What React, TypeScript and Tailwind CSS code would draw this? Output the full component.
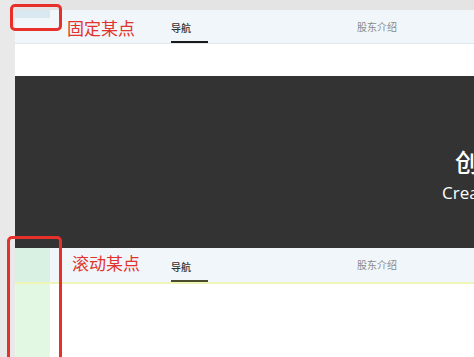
import React from 'react';

const cjk = { fontFamily: '"Noto Sans", "Noto Sans CJK SC", sans-serif' };

function NavBar({ label, strip, underline, labelPad }: { label: string; strip: 'top' | 'full'; underline: string; labelPad: string }) {
  return (
    <div className="flex h-full items-stretch">
      <div className="w-[35px] shrink-0">
        {strip === 'top' ? (
          <div className="h-[8px] w-[35px] bg-[#dae9f1]" />
        ) : (
          <div className="h-full w-[35px] bg-[#d9f1e2]" />
        )}
      </div>
      <div className={`flex items-center ${labelPad} w-[121px] shrink-0`}>
        <span className="text-[17px] leading-none text-[#e2342d]">{label}</span>
      </div>
      <div className="flex w-[37px] flex-col justify-end">
        <span className="text-[10px] font-medium leading-none text-[#333]">导航</span>
        <div className={`mt-[8px] h-[2px] w-[37px] ${underline}`} />
      </div>
      <div className="ml-[149px] flex items-center">
        <span className="text-[10px] leading-none text-[#8a8a8a]">股东介绍</span>
      </div>
    </div>
  );
}

export default function App() {
  return (
    <div className="relative flex h-[357px] w-full overflow-hidden bg-[#e7e7e7]" style={cjk}>
      <div className="w-[15px] shrink-0 bg-[#e9e9e9]" />
      <div className="flex min-w-0 flex-1 flex-col">
        <div className="h-[10px] bg-[#e4e4e4]" />
        <div className="h-[34px] border-b border-[#e2e7ea] bg-[#f0f6f9]">
          <NavBar label="固定某点" strip="top" underline="bg-[#1a1a1a]" labelPad="pl-[17px] pt-[3px]" />
        </div>
        <div className="h-[32px] bg-white" />
        <div className="h-[172px] overflow-hidden bg-[#333333]">
          <div className="flex flex-col whitespace-nowrap pt-[74px] text-white">
            <span className="pl-[440px] text-[25px] font-medium leading-none">创意</span>
            <span className="pl-[427px] pt-[9px] text-[17px] leading-none" style={{ fontFamily: '"Open Sans", sans-serif' }}>
              Creative
            </span>
          </div>
        </div>
        <div className="h-[36px] border-b-2 border-[#eef5b6] bg-[#f0f6f9]">
          <NavBar label="滚动某点" strip="full" underline="bg-[#4b4b2f]" labelPad="pl-[22px] pb-[3px]" />
        </div>
        <div className="flex flex-1 bg-white">
          <div className="w-[1px] bg-[#f3f7c9]" />
          <div className="w-[34px] bg-[#e2f8e3]" />
        </div>
      </div>
      <div className="pointer-events-none absolute left-[10px] top-[4px] h-[27px] w-[52px] rounded-[5px] border-[3px] border-[#e8302a]" />
      <div className="pointer-events-none absolute left-[7px] top-[236px] h-[140px] w-[55px] rounded-[5px] border-[3px] border-[#e8302a]" />
    </div>
  );
}
